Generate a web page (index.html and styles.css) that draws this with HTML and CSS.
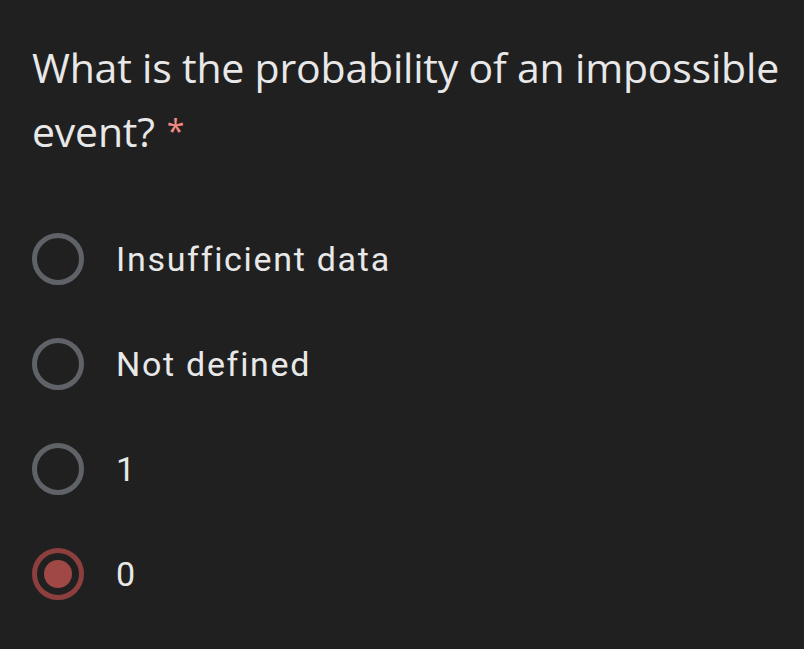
FILE: index.html
```html
<!DOCTYPE html>
<html lang="en">
<head>
  <meta charset="UTF-8">
  <meta name="viewport" content="width=device-width, initial-scale=1.0">
  <title>Question</title>
  <link rel="stylesheet" href="styles.css">
</head>
<body>
  <div class="question">
    <h2 class="title">What is the probability of an impossible event?<span class="required">*</span></h2>

    <div class="options">
      <label class="option">
        <span class="radio"></span>
        <span class="label">Insufficient data</span>
      </label>
      <label class="option">
        <span class="radio"></span>
        <span class="label">Not defined</span>
      </label>
      <label class="option">
        <span class="radio"></span>
        <span class="label">1</span>
      </label>
      <label class="option checked">
        <span class="radio"></span>
        <span class="label">0</span>
      </label>
    </div>
  </div>
</body>
</html>
```

FILE: styles.css
```css
body {
  margin: 0;
  padding: 0;
  background-color: #202020;
  color: #e8e8e8;
  font-family: Roboto, "Noto Sans", sans-serif;
}

.question {
  padding: 35px 10px 0 32px;
}

.title {
  font-family: "Open Sans", "Noto Sans", sans-serif;
  font-weight: 400;
  font-size: 41px;
  line-height: 64px;
  letter-spacing: -0.2px;
  margin: 0;
  width: 770px;
}

.required {
  color: #f28b82;
  font-size: 32px;
  line-height: 1;
  margin-left: 12px;
  vertical-align: 4px;
}

.options {
  margin-top: 70px;
  display: flex;
  flex-direction: column;
  gap: 53px;
}

.option {
  display: flex;
  align-items: center;
  gap: 32px;
  height: 52px;
}

.radio {
  width: 42px;
  height: 42px;
  border: 5px solid #5f6368;
  border-radius: 50%;
  position: relative;
  flex-shrink: 0;
}

.option.checked .radio {
  border-color: #8c3f3d;
}

.option.checked .radio::after {
  content: "";
  position: absolute;
  left: 7px;
  top: 7px;
  width: 28px;
  height: 28px;
  border-radius: 50%;
  background-color: #a04845;
}

.label {
  font-size: 34px;
  letter-spacing: 1.7px;
  color: #e8e8e8;
}
```
